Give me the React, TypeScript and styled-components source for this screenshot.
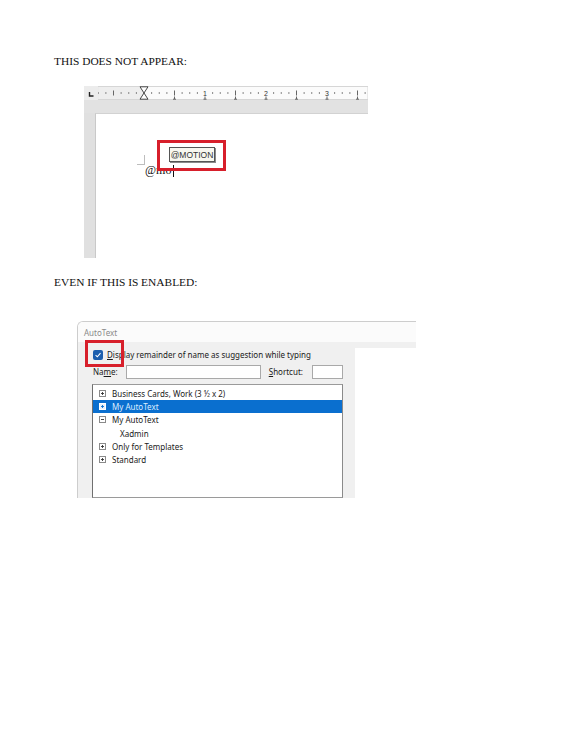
import styled, { createGlobalStyle } from 'styled-components';

const GlobalStyle = createGlobalStyle`
  html, body {
    margin: 0;
    padding: 0;
    background: #fff;
  }
  body {
    font-family: 'Liberation Serif', serif;
  }
`;

const INCH = 61;
const ZERO = 46;

const treeItems = [
  { label: 'Business Cards, Work (3 ½ x 2)', icon: 'plus', level: 0 },
  { label: 'My AutoText', icon: 'plus', level: 0, selected: true },
  { label: 'My AutoText', icon: 'minus', level: 0 },
  { label: 'Xadmin', icon: null, level: 1 },
  { label: 'Only for Templates', icon: 'plus', level: 0 },
  { label: 'Standard', icon: 'plus', level: 0 },
];

const RulerDrawing = () => {
  const marks = [];
  for (let i = -6; i <= 29; i++) {
    const x = ZERO + (i * INCH) / 8;
    if (x < 0 || x > 270) continue;
    if (i === 0) continue;
    if (i % 8 === 0) {
      marks.push(
        <text key={i} x={x} y={9.5} fontSize="7" textAnchor="middle" fill="#333" fontFamily="'Liberation Sans', sans-serif">
          {Math.abs(i / 8)}
        </text>
      );
    } else if (i % 4 === 0) {
      marks.push(<rect key={i} x={x - 0.5} y={4.5} width={1} height={5} fill="#666" />);
    } else {
      marks.push(<rect key={i} x={x - 0.5} y={6} width={1} height={2} fill="#888" />);
    }
  }
  const tabs = [];
  for (let i = 1; i <= 7; i++) {
    const x = ZERO + (i * INCH) / 2;
    tabs.push(
      <path key={'t' + i} d={`M${x} 10.5 V13 M${x - 1.5} 13.2 H${x + 1.5}`} stroke="#555" strokeWidth="0.9" fill="none" />
    );
  }
  return (
    <svg width="270" height="14" viewBox="0 0 270 14">
      <rect x="0" y="0.5" width="270" height="13" fill="#fbfbfb" stroke="#d6d6d6" strokeWidth="1" />
      <rect x="0.5" y="1" width={ZERO - 0.5} height="12" fill="#eeeeee" />
      {marks}
      {tabs}
      <path
        d={`M${ZERO - 4} 0.8 H${ZERO + 4} L${ZERO} 7 Z M${ZERO} 7 L${ZERO - 4} 13.2 H${ZERO + 4} Z`}
        fill="#fff"
        stroke="#333"
        strokeWidth="0.9"
        strokeLinejoin="round"
      />
    </svg>
  );
};

const Expander = ({ kind, selected }: { kind: string; selected?: boolean }) => (
  <ExpanderBox>
    <svg width="7" height="7" viewBox="0 0 7 7">
      <rect x="0.5" y="0.5" width="6" height="6" fill={selected ? '#e9f2fb' : '#fff'} stroke={selected ? '#fff' : '#8a8a8a'} />
      <path d={kind === 'plus' ? 'M2 3.5 H5 M3.5 2 V5' : 'M2 3.5 H5'} stroke={selected ? '#0a6fcf' : '#333'} strokeWidth="0.9" />
    </svg>
  </ExpanderBox>
);

export default function App() {
  return (
    <Page>
      <GlobalStyle />
      <Heading>THIS DOES NOT APPEAR:</Heading>

      <EditorShot>
        <RulerRow>
          <TabCorner>
            <svg width="14" height="14" viewBox="0 0 14 14">
              <path d="M5.5 6 V10 H9.5" stroke="#222" strokeWidth="1.4" fill="none" />
            </svg>
          </TabCorner>
          <RulerDrawing />
        </RulerRow>
        <GreyBand />
        <EditorBody>
          <SideStrip />
          <DocSheet>
            <CornerMark />
            <TypedLine>
              <span>@mo</span>
              <Caret />
            </TypedLine>
            <Highlight $left={61} $top={26} $width={69} $height={31} />
            <Suggestion>@MOTION</Suggestion>
          </DocSheet>
        </EditorBody>
      </EditorShot>

      <Heading $top={17}>EVEN IF THIS IS ENABLED:</Heading>

      <Dialog>
        <TitleBar>AutoText</TitleBar>
        <DialogBody>
          <MainColumn>
            <CheckRow>
              <CheckBox>
                <svg width="8" height="8" viewBox="0 0 8 8">
                  <path d="M1.6 4.2 L3.3 5.8 L6.5 2.2" stroke="#fff" strokeWidth="1.1" fill="none" />
                </svg>
              </CheckBox>
              <UiText>
                <u>D</u>isplay remainder of name as suggestion while typing
              </UiText>
            </CheckRow>
            <FieldRow>
              <UiText>
                Na<u>m</u>e:
              </UiText>
              <TextField $width={135} $gap={8} />
              <UiText $gap={8}>
                <u>S</u>hortcut:
              </UiText>
              <TextField $width={31} $gap={9} />
            </FieldRow>
            <TreeBox>
              {treeItems.map((item, i) => (
                <TreeRow key={i} $selected={item.selected} $level={item.level}>
                  {item.icon && <Expander kind={item.icon} selected={item.selected} />}
                  <span>{item.label}</span>
                </TreeRow>
              ))}
            </TreeBox>
          </MainColumn>
          <PreviewColumn>
            <PreviewPane />
          </PreviewColumn>
        </DialogBody>
        <Highlight $left={7} $top={18} $width={39} $height={27} />
      </Dialog>
    </Page>
  );
}

const Page = styled.div`
  width: 579px;
  min-height: 750px;
  padding-top: 54px;
  box-sizing: border-box;
  display: flex;
  flex-direction: column;
  background: #fff;
`;

const Heading = styled.p<{ $top?: number }>`
  margin: ${(p) => p.$top || 0}px 0 0 54px;
  font-family: 'Liberation Serif', 'Times New Roman', serif;
  font-size: 11.4px;
  line-height: 14px;
  color: #111;
`;

const EditorShot = styled.div`
  margin: 18px 0 0 84px;
  width: 284px;
  height: 172px;
  display: flex;
  flex-direction: column;
  background: #e2e2e2;
  overflow: hidden;
`;

const RulerRow = styled.div`
  display: flex;
  height: 14px;
  background: #ececec;
`;

const TabCorner = styled.div`
  width: 14px;
  height: 14px;
  svg {
    display: block;
  }
`;

const GreyBand = styled.div`
  height: 13px;
  background: #e2e2e2;
`;

const EditorBody = styled.div`
  flex: 1;
  display: flex;
`;

const SideStrip = styled.div`
  width: 11px;
  background: #e0e0e0;
`;

const DocSheet = styled.div`
  flex: 1;
  position: relative;
  background: #fff;
  border-left: 1px solid #c9c9c9;
  border-top: 1px solid #d2d2d2;
`;

const CornerMark = styled.div`
  position: absolute;
  left: 41px;
  top: 41px;
  width: 7px;
  height: 9px;
  border-right: 1px solid #bdbdbd;
  border-bottom: 1px solid #bdbdbd;
`;

const TypedLine = styled.div`
  display: flex;
  align-items: center;
  padding: 50px 0 0 49px;
  font-family: 'Liberation Serif', serif;
  font-size: 12px;
  line-height: 13px;
  color: #111;
`;

const Caret = styled.span`
  width: 1px;
  height: 12px;
  margin-left: 2px;
  background: #111;
`;

const Highlight = styled.div<{ $left: number; $top: number; $width: number; $height: number }>`
  position: absolute;
  left: ${(p) => p.$left}px;
  top: ${(p) => p.$top}px;
  width: ${(p) => p.$width}px;
  height: ${(p) => p.$height}px;
  box-sizing: border-box;
  border: 3px solid #d71f2b;
`;

const Suggestion = styled.div`
  position: absolute;
  left: 73px;
  top: 33px;
  width: 46px;
  height: 15px;
  box-sizing: border-box;
  display: flex;
  align-items: center;
  justify-content: center;
  background: #f7f7ef;
  border: 1px solid #555;
  box-shadow: 1px 1px 0 #8a8a8a;
  font-family: 'Liberation Sans', Arial, sans-serif;
  font-size: 8.5px;
  color: #333;
`;

const Dialog = styled.div`
  position: relative;
  margin: 32px 0 0 77px;
  width: 338px;
  height: 176px;
  display: flex;
  flex-direction: column;
  border-top: 1px solid #cdcdcd;
  border-left: 1px solid #cdcdcd;
  border-top-left-radius: 6px;
  overflow: hidden;
  font-family: 'Noto Sans', 'Open Sans', sans-serif;
`;

const TitleBar = styled.div`
  height: 20px;
  display: flex;
  align-items: center;
  padding-left: 6px;
  background: #fbfbfb;
  font-size: 8px;
  color: #8a8a8a;
`;

const DialogBody = styled.div`
  flex: 1;
  display: flex;
  background: #f0f0f0;
`;

const MainColumn = styled.div`
  width: 277px;
  display: flex;
  flex-direction: column;
  padding: 8px 12px 0 14px;
  box-sizing: border-box;
`;

const CheckRow = styled.div`
  display: flex;
  align-items: center;
  height: 10px;
  gap: 4px;
  padding-left: 1px;
`;

const CheckBox = styled.span`
  width: 10px;
  height: 10px;
  border-radius: 2px;
  background: #1d5fae;
  display: flex;
  align-items: center;
  justify-content: center;
  svg {
    display: block;
  }
`;

const UiText = styled.span<{ $gap?: number }>`
  margin-left: ${(p) => p.$gap || 0}px;
  font-size: 8px;
  line-height: 10px;
  color: #1a1a1a;
  white-space: nowrap;
  u {
    text-decoration-thickness: 0.7px;
    text-underline-offset: 1px;
  }
`;

const FieldRow = styled.div`
  display: flex;
  align-items: center;
  height: 14px;
  margin-top: 5px;
  padding-left: 1px;
`;

const TextField = styled.span<{ $width: number; $gap: number }>`
  width: ${(p) => p.$width}px;
  height: 14px;
  margin-left: ${(p) => p.$gap}px;
  box-sizing: border-box;
  background: #fff;
  border: 1px solid #a9a9a9;
`;

const TreeBox = styled.div`
  flex: 1;
  margin-top: 5px;
  width: 251px;
  box-sizing: border-box;
  padding-top: 2px;
  background: #fff;
  border: 1px solid #9a9a9a;
  border-left-color: #6f6f6f;
  border-right-color: #8a8a8a;
`;

const TreeRow = styled.div<{ $selected?: boolean; $level: number }>`
  height: 13.2px;
  display: flex;
  align-items: center;
  gap: 6px;
  padding-left: ${(p) => (p.$level ? 27 : 6)}px;
  background: ${(p) => (p.$selected ? '#0a6fcf' : 'transparent')};
  color: ${(p) => (p.$selected ? '#dcedff' : '#1a1a1a')};
  font-size: 8px;
  white-space: nowrap;
`;

const ExpanderBox = styled.span`
  width: 7px;
  height: 7px;
  svg {
    display: block;
  }
`;

const PreviewColumn = styled.div`
  flex: 1;
  display: flex;
  flex-direction: column;
  padding-top: 6px;
`;

const PreviewPane = styled.div`
  flex: 1;
  background: #fff;
`;
